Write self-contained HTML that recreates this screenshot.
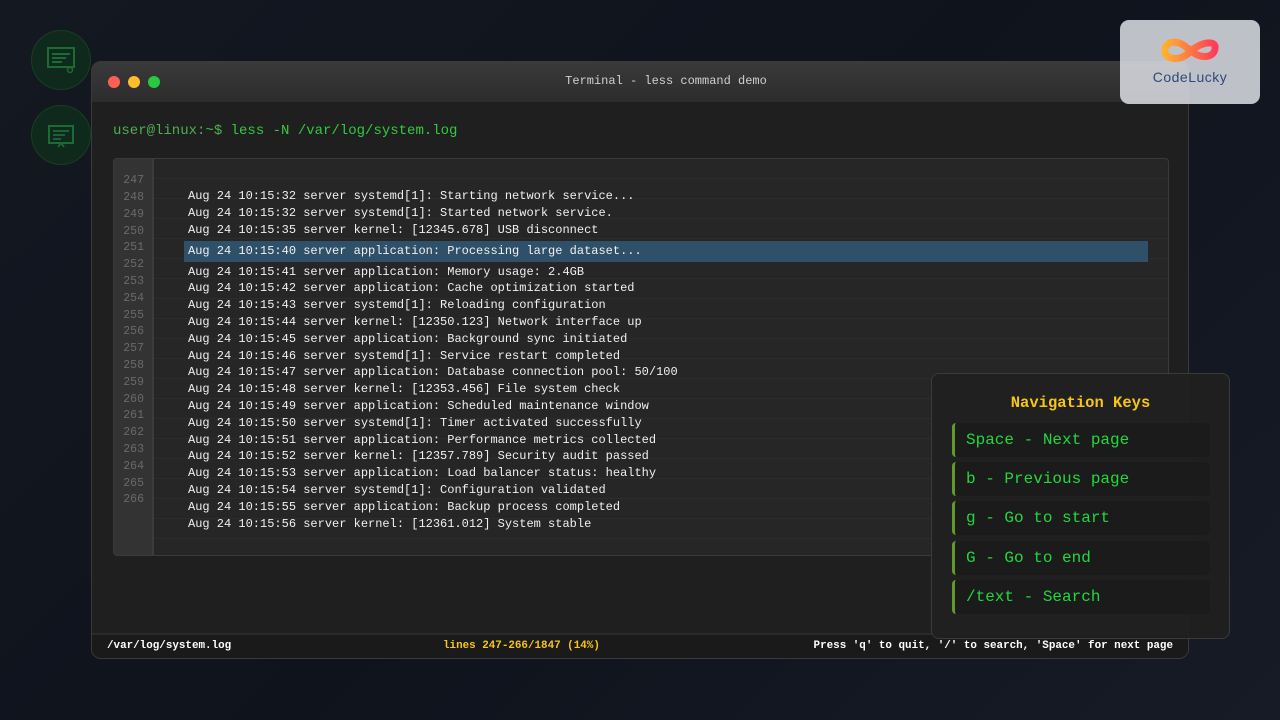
<!DOCTYPE html>
<html><head><meta charset="utf-8"><style>
*{margin:0;padding:0;box-sizing:border-box}
body{width:1280px;height:720px;overflow:hidden;background:linear-gradient(135deg,#141821,#0f131c 50%,#161b26);font-family:"Liberation Mono",monospace;position:relative}
.circ{position:absolute;left:31px;width:60px;height:60px;border-radius:50%;background:#0f2a1c;border:1.5px solid #15401f}
.win{position:absolute;left:91px;top:61px;width:1098px;height:598px;border-radius:10px;background:#1f1f1f;border:1px solid #3a3a3a;overflow:hidden}
.tb{height:40px;background:linear-gradient(#3a3a3a,#2c2c2c);position:relative}
.dot{position:absolute;top:14px;width:12px;height:12px;border-radius:50%}
.title{position:absolute;left:52px;right:0;top:12px;text-align:center;color:#d0d0d0;font-size:12px}
.prompt{position:absolute;left:21px;top:61px;font-size:14px;color:#2ecc40}
.pane{position:absolute;left:21px;top:96px;width:1056px;height:398px;border:1px solid #3a3a3a;border-radius:4px;background:#262626 repeating-linear-gradient(180deg,transparent 0 19px,#2c2c2c 19px 20px);overflow:hidden}
.gut{position:absolute;left:0;top:0;width:40px;height:100%;background:#333;border-right:2px solid #3c3c3c}
.ln{position:absolute;right:8px;font-size:11.5px;color:#6a6a6a}
.l{position:absolute;left:74px;font-size:12px;color:#f0f0f0;white-space:pre}
.hl{position:absolute;left:70px;top:82px;width:964px;height:21px;background:#2e5069}
.status{position:absolute;left:0;right:0;bottom:0;height:25px;background:#1a1a1a;border-top:2px solid #2a2a2a;font-size:10.9px;color:#fff;font-weight:bold}
.status span{position:absolute;top:5px}
.nav{position:absolute;left:931px;top:373px;width:299px;height:266px;background:rgba(32,32,32,0.97);border:1px solid #3a3a3a;border-radius:8px}
.nav h3{position:absolute;top:20px;left:0;right:0;text-align:center;color:#f5c518;font-size:15.5px;font-weight:bold}
.it{position:absolute;left:20px;width:258px;height:34px;background:#1b1b1b;border-left:3px solid #5f9a2a;border-radius:4px;color:#22d83c;font-size:16px;padding:8px 0 0 11px}
.logo{position:absolute;left:1120px;top:20px;width:140px;height:84px;border-radius:9px;background:rgba(215,217,224,0.88)}
</style></head><body>
<div class="circ" style="top:30px"><svg width="60" height="60" viewBox="0 0 60 60"><rect x="16" y="17" width="26" height="19" fill="none" stroke="#1c6a34" stroke-width="2"/><path d="M20 23h18M20 27h14M20 31h10" stroke="#1c6a34" stroke-width="2"/><circle cx="38" cy="39" r="2.5" fill="none" stroke="#1c6a34" stroke-width="1.5"/></svg></div>
<div class="circ" style="top:105px"><svg width="60" height="60" viewBox="0 0 60 60"><rect x="17" y="20" width="24" height="17" fill="none" stroke="#1c6a34" stroke-width="2"/><path d="M21 25h16M21 29h12M21 33h8M29 37l-3 4M29 37l3 4" stroke="#1c6a34" stroke-width="1.8"/></svg></div>

<div class="win">
 <div class="tb">
  <div class="dot" style="left:16px;background:#ff5f57"></div>
  <div class="dot" style="left:36px;background:#febc2e"></div>
  <div class="dot" style="left:56px;background:#28c840"></div>
  <div class="title">Terminal - less command demo</div>
 </div>
 <div class="prompt"><span style="color:#4caf50">user@linux:~$</span> less -N /var/log/system.log</div>
 <div class="pane">
  <div class="gut">
   <div class="ln" style="top:15px">247</div><div class="ln" style="top:32px">248</div><div class="ln" style="top:49px">249</div><div class="ln" style="top:66px">250</div><div class="ln" style="top:82px">251</div><div class="ln" style="top:99px">252</div><div class="ln" style="top:116px">253</div><div class="ln" style="top:133px">254</div><div class="ln" style="top:150px">255</div><div class="ln" style="top:166px">256</div><div class="ln" style="top:183px">257</div><div class="ln" style="top:200px">258</div><div class="ln" style="top:217px">259</div><div class="ln" style="top:234px">260</div><div class="ln" style="top:250px">261</div><div class="ln" style="top:267px">262</div><div class="ln" style="top:284px">263</div><div class="ln" style="top:301px">264</div><div class="ln" style="top:318px">265</div><div class="ln" style="top:334px">266</div>
  </div>
  <div class="hl"></div>
  <div class="l" style="top:30px">Aug 24 10:15:32 server systemd[1]: Starting network service...</div>
  <div class="l" style="top:47px">Aug 24 10:15:32 server systemd[1]: Started network service.</div>
  <div class="l" style="top:64px">Aug 24 10:15:35 server kernel: [12345.678] USB disconnect</div>
  <div class="l" style="top:85px">Aug 24 10:15:40 server application: Processing large dataset...</div>
  <div class="l" style="top:106px">Aug 24 10:15:41 server application: Memory usage: 2.4GB</div>
  <div class="l" style="top:122px">Aug 24 10:15:42 server application: Cache optimization started</div>
  <div class="l" style="top:139px">Aug 24 10:15:43 server systemd[1]: Reloading configuration</div>
  <div class="l" style="top:156px">Aug 24 10:15:44 server kernel: [12350.123] Network interface up</div>
  <div class="l" style="top:173px">Aug 24 10:15:45 server application: Background sync initiated</div>
  <div class="l" style="top:190px">Aug 24 10:15:46 server systemd[1]: Service restart completed</div>
  <div class="l" style="top:206px">Aug 24 10:15:47 server application: Database connection pool: 50/100</div>
  <div class="l" style="top:223px">Aug 24 10:15:48 server kernel: [12353.456] File system check</div>
  <div class="l" style="top:240px">Aug 24 10:15:49 server application: Scheduled maintenance window</div>
  <div class="l" style="top:257px">Aug 24 10:15:50 server systemd[1]: Timer activated successfully</div>
  <div class="l" style="top:274px">Aug 24 10:15:51 server application: Performance metrics collected</div>
  <div class="l" style="top:290px">Aug 24 10:15:52 server kernel: [12357.789] Security audit passed</div>
  <div class="l" style="top:307px">Aug 24 10:15:53 server application: Load balancer status: healthy</div>
  <div class="l" style="top:324px">Aug 24 10:15:54 server systemd[1]: Configuration validated</div>
  <div class="l" style="top:341px">Aug 24 10:15:55 server application: Backup process completed</div>
  <div class="l" style="top:358px">Aug 24 10:15:56 server kernel: [12361.012] System stable</div>
 </div>
 <div class="status">
  <span style="left:15px">/var/log/system.log</span>
  <span style="left:351px;color:#f5c518">lines 247-266/1847 (14%)</span>
  <span style="right:15px">Press 'q' to quit, '/' to search, 'Space' for next page</span>
 </div>
</div>

<div class="logo">
 <svg style="position:absolute;left:38px;top:14px" width="64" height="36" viewBox="0 0 64 36"><defs><linearGradient id="g" x1="0" x2="1"><stop offset="0" stop-color="#ffb12e"/><stop offset="1" stop-color="#ff3d5a"/></linearGradient></defs><path d="M32 18C26 7 9 4 7 15c-2 11 15 13 25 3 10-10 27-13 25-3-2 11-19 9-25 0" fill="none" stroke="url(#g)" stroke-width="7" stroke-linecap="round"/></svg>
 <div style="position:absolute;left:0;right:0;top:49px;text-align:center;font-family:'Liberation Sans',sans-serif;font-size:14px;color:#2d4a78;letter-spacing:0.5px">CodeLucky</div>
</div>

<div class="nav">
 <h3>Navigation Keys</h3>
 <div class="it" style="top:49px">Space - Next page</div>
 <div class="it" style="top:88px">b - Previous page</div>
 <div class="it" style="top:127px">g - Go to start</div>
 <div class="it" style="top:167px">G - Go to end</div>
 <div class="it" style="top:206px">/text - Search</div>
</div>
</body></html>
